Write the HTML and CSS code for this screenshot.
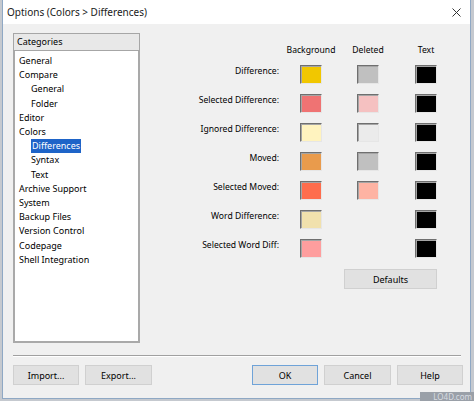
FILE: index.html
```html
<!DOCTYPE html>
<html>
<head>
  <title>Options (Colors &gt; Differences)</title>
  <link rel="stylesheet" href="styles.css">
</head>
<body>
  <div class="window">
    <div class="titlebar">
      <span class="title">Options (Colors &gt; Differences)</span>
      <svg class="close" width="9" height="9" viewBox="0 0 9 9">
        <path d="M0.5 0.5 L8.5 8.5 M8.5 0.5 L0.5 8.5" stroke="#333" stroke-width="1" fill="none"/>
      </svg>
    </div>

    <div class="content">
      <div class="main">
        <div class="categories">
          <div class="cat-header">Categories</div>
          <ul class="cat-list">
            <li>General</li>
            <li>Compare</li>
            <li class="sub">General</li>
            <li class="sub">Folder</li>
            <li>Editor</li>
            <li>Colors</li>
            <li class="sub"><span class="selected">Differences</span></li>
            <li class="sub">Syntax</li>
            <li class="sub">Text</li>
            <li>Archive Support</li>
            <li>System</li>
            <li>Backup Files</li>
            <li>Version Control</li>
            <li>Codepage</li>
            <li>Shell Integration</li>
          </ul>
        </div>

        <div class="colors">
          <div class="grid">
            <div></div>
            <div class="col-head"><span>Background</span></div>
            <div class="col-head"><span>Deleted</span></div>
            <div class="col-head"><span>Text</span></div>

            <div class="label">Difference:</div>
            <div class="swatch" style="background:#f1c700"></div>
            <div class="swatch" style="background:#c0c0c0"></div>
            <div class="swatch" style="background:#000"></div>

            <div class="label">Selected Difference:</div>
            <div class="swatch" style="background:#ef7373"></div>
            <div class="swatch" style="background:#f5c1c1"></div>
            <div class="swatch" style="background:#000"></div>

            <div class="label">Ignored Difference:</div>
            <div class="swatch" style="background:#fff3bf"></div>
            <div class="swatch" style="background:#ebebeb"></div>
            <div class="swatch" style="background:#000"></div>

            <div class="label">Moved:</div>
            <div class="swatch" style="background:#e99b4c"></div>
            <div class="swatch" style="background:#c0c0c0"></div>
            <div class="swatch" style="background:#000"></div>

            <div class="label">Selected Moved:</div>
            <div class="swatch" style="background:#fe6d4d"></div>
            <div class="swatch" style="background:#feb3a3"></div>
            <div class="swatch" style="background:#000"></div>

            <div class="label">Word Difference:</div>
            <div class="swatch" style="background:#f1e1ad"></div>
            <div></div>
            <div class="swatch" style="background:#000"></div>

            <div class="label">Selected Word Diff:</div>
            <div class="swatch" style="background:#fe9e9e"></div>
            <div></div>
            <div class="swatch" style="background:#000"></div>

            <button class="btn defaults">Defaults</button>
          </div>
        </div>
      </div>

      <div class="separator"></div>

      <div class="footer">
        <div class="btn-group">
          <button class="btn">Import...</button>
          <button class="btn">Export...</button>
        </div>
        <div class="btn-group">
          <button class="btn default">OK</button>
          <button class="btn">Cancel</button>
          <button class="btn">Help</button>
        </div>
      </div>
    </div>
  </div>

  <div class="watermark">LO4D.com</div>
</body>
</html>
```

FILE: styles.css
```css
body {
  margin: 0;
  width: 474px;
  height: 401px;
  overflow: hidden;
  background: #c5c9cf;
  font-family: "Noto Sans", sans-serif;
  font-size: 9px;
  color: #000;
  position: relative;
}
.window {
  margin-left: 2px;
  width: 467px;
  height: 398px;
  border: 1px solid #8fa8c4;
  border-top: none;
  background: #f0f0f0;
  display: flex;
  flex-direction: column;
}
.titlebar {
  height: 24px;
  background: #fff;
  display: flex;
  align-items: center;
  justify-content: space-between;
  padding: 0 9px 0 4px;
}
.title {
  font-size: 10px;
  color: #1a1a1a;
}
.content {
  flex: 1;
  display: flex;
  flex-direction: column;
  padding: 9px 7px 0 10px;
}
.main {
  display: flex;
}
.categories {
  width: 127px;
  height: 310px;
  display: flex;
  flex-direction: column;
}
.cat-header {
  height: 16px;
  line-height: 16px;
  padding-left: 3px;
  border: 1px solid #a6a6a6;
  background: #e8e8e8;
}
.cat-list {
  flex: 1;
  margin: 0;
  padding: 3px 0 0 4px;
  list-style: none;
  background: #fff;
  border: 2px solid #a9a9a9;
  border-top: none;
}
.cat-list li {
  line-height: 14.2px;
  white-space: nowrap;
}
.cat-list li.sub {
  padding-left: 12px;
}
.selected {
  display: inline-block;
  padding: 0 1px;
  line-height: 13.4px;
  background: #1e64c8;
  color: #fff;
}
.colors {
  flex: 1;
  padding-top: 10px;
}
.grid {
  display: grid;
  grid-template-columns: 160px 57px 58px 22px;
  grid-template-rows: 12px repeat(7, 19px) 20px;
  row-gap: 10px;
  font-size: 8.6px;
}
.col-head {
  width: 22px;
  display: flex;
  justify-content: center;
  line-height: 14px;
  white-space: nowrap;
}
.label {
  text-align: right;
  padding-right: 21px;
  line-height: 13px;
  white-space: nowrap;
}
.swatch {
  width: 22px;
  height: 19px;
  box-sizing: border-box;
  border: 1px solid;
  border-color: #6f6f6f #e6e6e6 #e6e6e6 #6f6f6f;
  box-shadow: inset 1px 1px 0 #a5a5a5;
}
.btn {
  height: 20px;
  width: 66px;
  padding: 0;
  font-family: inherit;
  font-size: 9px;
  color: #000;
  background: #e1e1e1;
  border: 1px solid #d0d0d0;
}
.defaults {
  grid-column: 2 / 5;
  justify-self: end;
  width: 93px;
  margin-top: 1px;
}
.separator {
  margin: 12px 2px 0 0;
  height: 0;
  border-top: 1px solid #a0a0a0;
  border-bottom: 1px solid #fff;
}
.footer {
  margin-top: 8px;
  display: flex;
  justify-content: space-between;
}
.btn-group {
  display: flex;
  gap: 6px;
}
.btn-group .btn:nth-child(2) {
  width: 67px;
}
.btn.default {
  border-color: #6fa3d8;
}
.watermark {
  position: absolute;
  right: 0;
  bottom: 0;
  width: 52px;
  height: 9px;
  line-height: 9px;
  font-size: 8px;
  color: #d8dce2;
  background: #9aa0a8;
  text-align: right;
  padding-right: 2px;
}
```
